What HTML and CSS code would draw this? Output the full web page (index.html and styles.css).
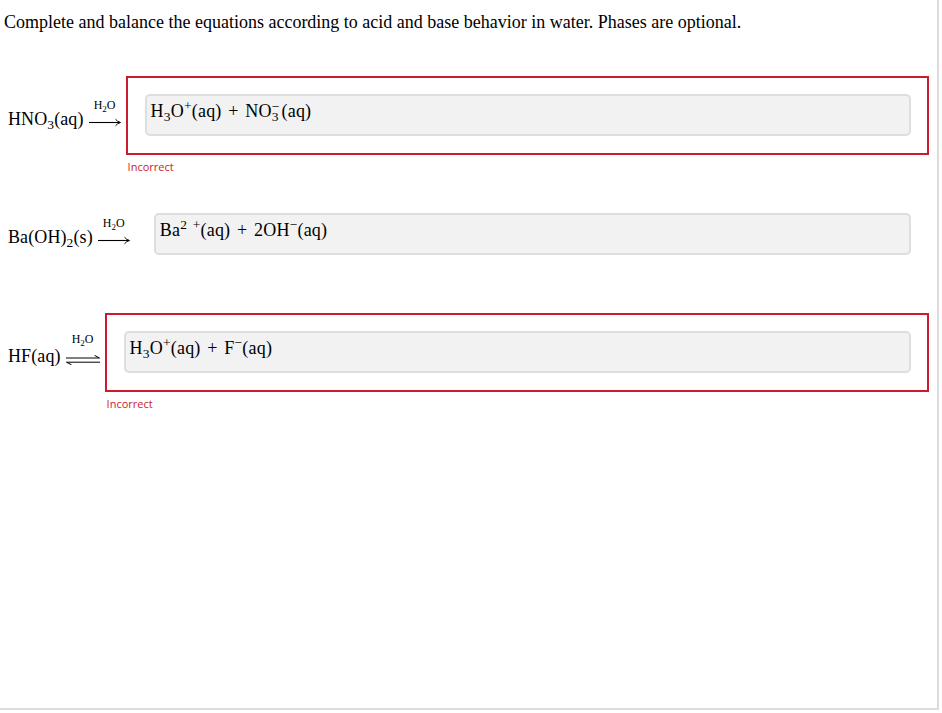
FILE: index.html
```html
<!DOCTYPE html>
<html>
<head>
<meta charset="utf-8">
<link rel="stylesheet" href="styles.css">
</head>
<body>
<div class="sheet">
  <p class="prompt">Complete and balance the equations according to acid and base behavior in water. Phases are optional.</p>

  <div class="eq">
    <div class="lhs">HNO<span class="sb">3</span>(aq)</div>
    <div class="arrow">
      <span class="cond">H<span class="sb">2</span>O</span>
      <svg class="yield" width="32" height="9" viewBox="0 0 32 9"><path d="M0 4.5H31" stroke="#000" stroke-width="1.1"/><path d="M26.5 1.2Q28.5 3.8 31.5 4.5Q28.5 5.2 26.5 7.8" fill="none" stroke="#000" stroke-width="1"/></svg>
    </div>
    <div class="answer bad"><div class="field"><span class="math">H<span class="sb">3</span>O<span class="sp">+</span>(aq) + NO<span class="ss"><span>−</span><span>3</span></span>(aq)</span></div></div>
    <div class="feedback">Incorrect</div>
  </div>

  <div class="eq">
    <div class="lhs">Ba(OH)<span class="sb">2</span>(s)</div>
    <div class="arrow">
      <span class="cond">H<span class="sb">2</span>O</span>
      <svg class="yield" width="32" height="9" viewBox="0 0 32 9"><path d="M0 4.5H31" stroke="#000" stroke-width="1.1"/><path d="M26.5 1.2Q28.5 3.8 31.5 4.5Q28.5 5.2 26.5 7.8" fill="none" stroke="#000" stroke-width="1"/></svg>
    </div>
    <div class="answer"><div class="field"><span class="math">Ba<span class="sp">2 +</span>(aq) + 2OH<span class="sp">−</span>(aq)</span></div></div>
    <div class="feedback"></div>
  </div>

  <div class="eq">
    <div class="lhs">HF(aq)</div>
    <div class="arrow eqm">
      <span class="cond">H<span class="sb">2</span>O</span>
      <svg class="harp" width="34" height="10" viewBox="0 0 34 10"><path d="M0 3H33.5M33.5 3L28.5 0.3M34 7.2H0.5M0.5 7.2L5.5 9.8" fill="none" stroke="#000" stroke-width="1"/></svg>
    </div>
    <div class="answer bad"><div class="field"><span class="math">H<span class="sb">3</span>O<span class="sp">+</span>(aq) + F<span class="sp">−</span>(aq)</span></div></div>
    <div class="feedback">Incorrect</div>
  </div>
</div>
</body>
</html>
```

FILE: styles.css
```css
html, body {
  margin: 0;
  padding: 0;
  background: #fff;
}

.sheet {
  width: 939px;
  height: 710px;
  box-sizing: border-box;
  padding: 0 8px 0 4px;
  border-right: 2px solid #dcdcdc;
  border-bottom: 2px solid #dcdcdc;
  font-family: "Liberation Serif", "Times New Roman", serif;
  color: #000;
  overflow: hidden;
}

.prompt {
  margin: 12px 0 43px 0;
  font-size: 18px;
  line-height: 21px;
  white-space: nowrap;
}

.eq {
  display: grid;
  grid-template-columns: auto auto 1fr;
  align-items: center;
  column-gap: 5px;
  margin-left: 4px;
}

.lhs {
  font-size: 18px;
  line-height: 22px;
  padding-top: 6px;
  letter-spacing: 0.1px;
  white-space: nowrap;
}

.sb, .sp {
  font-size: 0.75em;
  line-height: 0;
}

.sb { vertical-align: -0.3em; }
.sp { vertical-align: 0.5em; }

.ss {
  display: inline-flex;
  flex-direction: column;
  align-items: flex-start;
  font-size: 0.75em;
  line-height: 0.72em;
  vertical-align: 0.46em;
  margin-right: 2px;
}

.arrow {
  display: flex;
  flex-direction: column;
  align-items: center;
  padding-bottom: 6px;
}

.cond {
  font-size: 12px;
  line-height: 13px;
  white-space: nowrap;
  letter-spacing: 0;
}

.cond .sb { font-size: 0.75em; vertical-align: -0.3em; }

.yield { display: block; margin-top: 6px; }

.arrow.eqm { padding-bottom: 8px; }
.harp { display: block; margin-top: 9px; }

.answer {
  border: 2px solid transparent;
  padding: 16px 16px 17px 17px;
}

.answer.bad { border-color: #cc1a2e; }

.field {
  height: 42px;
  box-sizing: border-box;
  border: 2px solid #dedede;
  border-radius: 5px;
  background: #f2f2f2;
  padding: 0 4px 8px 4px;
  display: flex;
  align-items: center;
}

.math {
  font-size: 18px;
  line-height: 22px;
  letter-spacing: 0.2px;
  word-spacing: 2px;
  white-space: pre;
}

.feedback {
  grid-column: 3;
  margin: 4px 0 19.5px 0;
  min-height: 16px;
  padding-left: 2px;
  font-family: "Open Sans", "Noto Sans", sans-serif;
  font-size: 11px;
  line-height: 16px;
  color: #cc1a2e;
}
```
